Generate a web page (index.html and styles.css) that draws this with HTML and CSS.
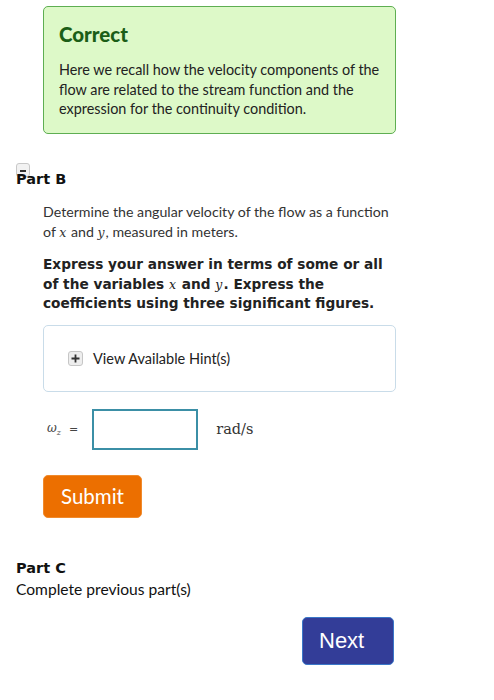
FILE: index.html
```html
<!DOCTYPE html>
<html>
<head>
<meta charset="utf-8">
<link rel="stylesheet" href="styles.css">
</head>
<body>
<div class="page">
  <div class="indent">
    <div class="correct">
      <div class="correct-title">Correct</div>
      <p class="correct-text">Here we recall how the velocity components of the flow are related to the stream function and the expression for the continuity condition.</p>
    </div>
  </div>

  <div class="part-head">
    <span class="collapse"><span class="dash"></span></span>
    <h2 class="part-title">Part B</h2>
  </div>

  <div class="indent">
    <p class="question">Determine the angular velocity of the flow as a function of <i class="math">x</i> and <i class="math">y</i>, measured in meters.</p>
    <p class="instruction">Express your answer in terms of some or all of the variables <i class="math">x</i> and <i class="math">y</i>. Express the coefficients using three significant figures.</p>

    <div class="hints">
      <span class="plus-box">
        <svg width="11" height="11" viewBox="0 0 11 11"><path d="M5.5 1.5v8M1.5 5.5h8" stroke="#333" stroke-width="1.8"/></svg>
      </span>
      <span class="hint-text">View Available Hint(s)</span>
    </div>

    <div class="answer-row">
      <span class="omega">ω<sub>z</sub></span>
      <span class="eq">=</span>
      <span class="input"></span>
      <span class="unit">rad/s</span>
    </div>

    <button class="submit">Submit</button>
  </div>

  <div class="part-c">
    <h2 class="part-title">Part C</h2>
    <div class="pending">Complete previous part(s)</div>
  </div>

  <div class="next-row">
    <button class="next">Next</button>
  </div>
</div>
</body>
</html>
```

FILE: styles.css
```css
html, body {
  margin: 0;
  padding: 0;
  background: #fff;
}
body {
  font-family: Lato, "Open Sans", sans-serif;
  color: #222;
}
.page {
  width: 494px;
  padding: 6px 0 0 16px;
  box-sizing: border-box;
}
.indent {
  padding-left: 27px;
  width: 353px;
}
.correct {
  background: #ddf9c8;
  border: 1px solid #5eae52;
  border-radius: 5px;
  padding: 15px 15px 0 15px;
  height: 111px;
}
.correct-title {
  font-weight: 900;
  font-size: 20.5px;
  color: #1b5e17;
  line-height: 24px;
}
.correct-text {
  margin: 14px 0 0;
  font-size: 14.4px;
  line-height: 19.5px;
  color: #222;
}
.part-head {
  position: relative;
  margin-top: 28px;
  height: 28px;
}
.collapse {
  position: absolute;
  left: 0;
  top: 1px;
  width: 14px;
  height: 14px;
  border: 1px solid #c8c8c8;
  border-radius: 3px;
  background: #f2f2f2;
  box-sizing: border-box;
}
.dash {
  position: absolute;
  left: 3px;
  top: 6px;
  width: 6px;
  height: 2px;
  background: #333;
}
.part-title {
  margin: 0;
  font-family: "DejaVu Sans", Verdana, sans-serif;
  font-weight: bold;
  font-size: 14.5px;
  line-height: 20px;
  color: #111;
  position: relative;
  padding-top: 7px;
}
.question {
  margin: 12px 0 0;
  font-size: 14.2px;
  line-height: 20px;
  color: #333;
}
.math {
  font-family: "DejaVu Serif", "Liberation Serif", serif;
  font-size: 12.5px;
  padding-right: 1px;
}
.instruction {
  margin: 12px 0 0;
  font-family: "DejaVu Sans", Verdana, sans-serif;
  font-weight: bold;
  font-size: 13.7px;
  line-height: 19.5px;
  color: #222;
}
.instruction .math {
  font-weight: normal;
}
.hints {
  margin-top: 11px;
  border: 1px solid #c9dce9;
  border-radius: 5px;
  height: 67px;
  box-sizing: border-box;
  display: flex;
  align-items: center;
  padding-left: 24px;
}
.plus-box {
  width: 15px;
  height: 15px;
  border: 1px solid #c6c6c6;
  border-radius: 3px;
  background: #eeeeee;
  box-sizing: border-box;
  display: flex;
  align-items: center;
  justify-content: center;
}
.hint-text {
  margin-left: 10px;
  font-size: 14.5px;
  color: #222;
}
.answer-row {
  margin-top: 17px;
  display: flex;
  align-items: center;
  height: 41px;
}
.omega {
  font-family: "DejaVu Serif", "Liberation Serif", serif;
  font-style: italic;
  font-size: 12px;
  color: #444;
  margin-left: 4px;
}
.omega sub {
  font-size: 8px;
}
.eq {
  font-family: "DejaVu Sans", sans-serif;
  font-size: 11px;
  color: #444;
  margin-left: 8px;
}
.input {
  margin-left: 14px;
  width: 106px;
  height: 41px;
  border: 2px solid #3b8fa6;
  box-sizing: border-box;
  background: #fff;
}
.unit {
  margin-left: 18px;
  font-family: "DejaVu Serif", "Liberation Serif", serif;
  font-size: 14.5px;
  color: #333;
}
.submit {
  display: block;
  margin-top: 25px;
  width: 99px;
  height: 43px;
  background: #ec6f00;
  border: 1px solid #f08a2c;
  border-radius: 5px;
  color: #fff;
  font-family: Lato, "Open Sans", sans-serif;
  font-size: 20.5px;
  padding: 0;
}
.part-c {
  margin-top: 40px;
}
.part-c .part-title {
  padding-top: 0;
}
.pending {
  font-size: 15.6px;
  line-height: 20px;
  margin-top: 1px;
  color: #111;
}
.next-row {
  width: 378px;
  display: flex;
  justify-content: flex-end;
  margin-top: 18px;
}
.next {
  width: 92px;
  height: 48px;
  background: #333d98;
  border: 1.5px solid #3a77c8;
  border-radius: 5px;
  color: #fff;
  font-family: "Liberation Sans", Arial, sans-serif;
  font-size: 22px;
  text-align: left;
  padding: 0 0 0 16px;
}
```
